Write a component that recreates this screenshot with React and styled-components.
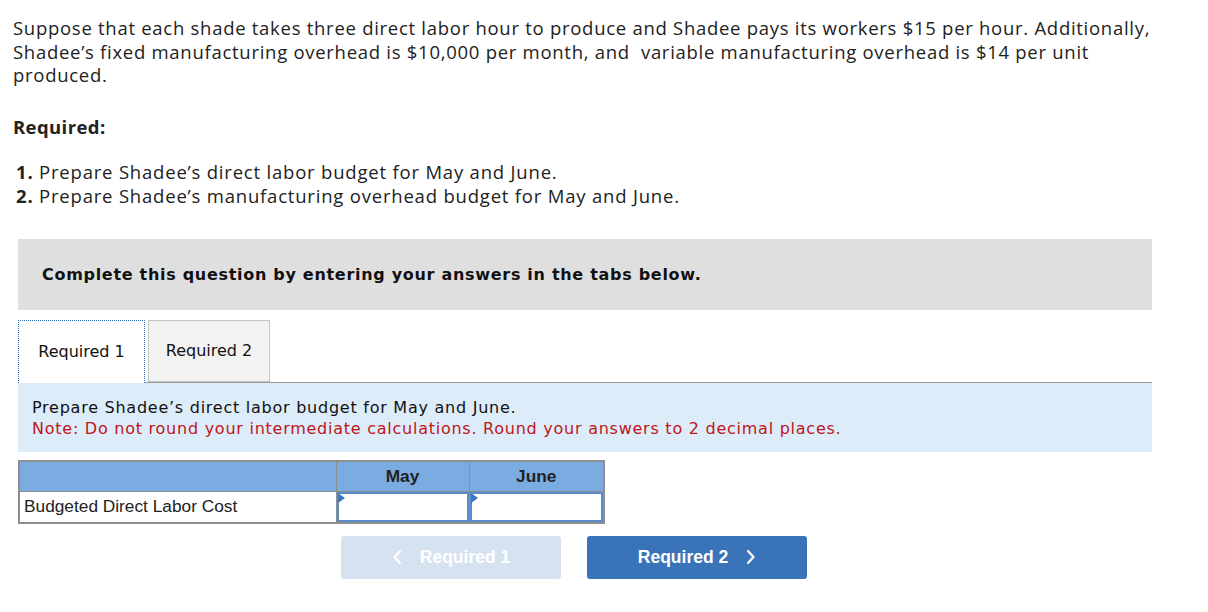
import React from "react";
import styled, { createGlobalStyle } from "styled-components";

const GlobalStyle = createGlobalStyle`
  body {
    margin: 0;
    background: #fff;
    font-family: "Open Sans", "Lato", sans-serif;
    color: #222;
  }
`;

const Page = styled.div`
  width: 1208px;
  padding-top: 16px;
`;

const Para = styled.p`
  margin: 0 0 0 13px;
  font-size: 18.5px;
  letter-spacing: 0.72px;
  line-height: 23.5px;
  color: #222;
  white-space: nowrap;
`;

const Heading = styled.h3`
  margin: 28px 0 0 13px;
  font-size: 18.5px;
  letter-spacing: 0.4px;
  font-weight: 700;
  line-height: 23px;
`;

const ReqList = styled.ol`
  list-style: none;
  margin: 22px 0 0 16px;
  padding: 0;
  font-size: 18.5px;
  letter-spacing: 0.8px;
  line-height: 24px;

  b {
    font-weight: 700;
  }
`;

const Instructions = styled.div`
  margin: 31px 0 0 18px;
  width: 1134px;
  height: 71px;
  background: #dfdfdf;
  display: flex;
  align-items: center;
  padding-left: 24px;
  box-sizing: border-box;
  font-family: Verdana, "DejaVu Sans", sans-serif;
  font-weight: 700;
  font-size: 16px;
  color: #111;
  letter-spacing: 0.7px;
`;

const TabBar = styled.div`
  margin: 10px 0 0 18px;
  width: 1134px;
  display: flex;
  align-items: flex-end;
  border-bottom: 1px solid #999;
  height: 62px;
`;

const Tab = styled.div`
  box-sizing: border-box;
  height: ${p => (p.active ? "63px" : "62px")};
  margin-bottom: ${p => (p.active ? "-1px" : "0")};
  width: ${p => (p.active ? "127px" : "122px")};
  margin-right: 3px;
  display: flex;
  align-items: center;
  justify-content: center;
  font-family: Verdana, "DejaVu Sans", sans-serif;
  font-size: 16px;
  color: #111;
  background: ${p => (p.active ? "#fff" : "#f2f2f2")};
  border: ${p => (p.active ? "1px dotted #2f6fbf" : "1px solid #c4c4c4")};
  border-bottom: ${p => (p.active ? "none" : "1px solid #c4c4c4")};
`;

const Prompt = styled.div`
  margin-left: 18px;
  width: 1134px;
  height: 69px;
  box-sizing: border-box;
  background: #dcecf9;
  padding: 14px 0 0 14px;
  font-family: Verdana, "DejaVu Sans", sans-serif;
  font-size: 16px;
  letter-spacing: 0.75px;
  line-height: 21px;
  color: #111;
`;

const Note = styled.div`
  color: #c0151b;
`;

const Grid = styled.table`
  margin: 8px 0 0 18px;
  width: 585px;
  table-layout: fixed;
  border-collapse: collapse;
  font-family: "Liberation Sans", Arial, sans-serif;
  font-size: 17.3px;
  border: 2px solid #8e8e8e;

  th {
    background: #7aace2;
    height: 29px;
    font-weight: 700;
    color: #222;
    border: 1px solid #8e8e8e;
    padding: 0;
  }

  td {
    border: 1px solid #8e8e8e;
    height: 30px;
    padding: 0;
  }
`;

const LabelCell = styled.td`
  padding-left: 4px !important;
  color: #222;
  white-space: nowrap;
`;

const InputCell = styled.td`
  position: relative;
`;

const Field = styled.div`
  position: absolute;
  inset: 0;
  border: 2px solid #5a8bc8;
  background: #fff;

  &::before {
    content: "";
    position: absolute;
    left: -1px;
    top: -1px;
    border-style: solid;
    border-width: 5px 0 5px 7px;
    border-color: transparent transparent transparent #3a78c2;
  }
`;

const Nav = styled.div`
  display: flex;
  gap: 26px;
  margin: 12px 0 0 341px;
`;

const NavButton = styled.button`
  width: 220px;
  height: 43px;
  border: none;
  border-radius: 3px;
  background: ${p => (p.disabled ? "#d6e2f0" : "#3a74b8")};
  color: #fff;
  font-family: "Liberation Sans", Arial, sans-serif;
  font-weight: 700;
  font-size: 17.5px;
  display: flex;
  align-items: center;
  justify-content: center;
  gap: 18px;
  padding: 0;
  cursor: ${p => (p.disabled ? "default" : "pointer")};
`;

const Chevron = ({ dir }) => (
  <svg width="10" height="16" viewBox="0 0 10 16">
    <path
      d={dir === "left" ? "M8 2 L2.5 8 L8 14" : "M2 2 L7.5 8 L2 14"}
      fill="none"
      stroke="#fff"
      strokeWidth="2.2"
      strokeLinecap="round"
      strokeLinejoin="round"
    />
  </svg>
);

export default function App() {
  return (
    <>
      <GlobalStyle />
      <Page>
        <Para>
          Suppose that each shade takes three direct labor hour to produce and
          Shadee pays its workers $15 per hour. Additionally,
          <br />
          Shadee’s fixed manufacturing overhead is $10,000 per month, and&nbsp;
          variable manufacturing overhead is $14 per unit
          <br />
          produced.
        </Para>
        <Heading>Required:</Heading>
        <ReqList>
          <li>
            <b>1.</b> Prepare Shadee’s direct labor budget for May and June.
          </li>
          <li>
            <b>2.</b> Prepare Shadee’s manufacturing overhead budget for May and
            June.
          </li>
        </ReqList>
        <Instructions>
          Complete this question by entering your answers in the tabs below.
        </Instructions>
        <TabBar>
          <Tab active>Required 1</Tab>
          <Tab>Required 2</Tab>
        </TabBar>
        <Prompt>
          Prepare Shadee’s direct labor budget for May and June.
          <Note>
            Note: Do not round your intermediate calculations. Round your
            answers to 2 decimal places.
          </Note>
        </Prompt>
        <Grid>
          <colgroup>
            <col style={{ width: 317 }} />
            <col style={{ width: 133 }} />
            <col style={{ width: 135 }} />
          </colgroup>
          <thead>
            <tr>
              <th></th>
              <th>May</th>
              <th>June</th>
            </tr>
          </thead>
          <tbody>
            <tr>
              <LabelCell>Budgeted Direct Labor Cost</LabelCell>
              <InputCell>
                <Field />
              </InputCell>
              <InputCell>
                <Field />
              </InputCell>
            </tr>
          </tbody>
        </Grid>
        <Nav>
          <NavButton disabled>
            <Chevron dir="left" />
            Required 1
          </NavButton>
          <NavButton>
            Required 2
            <Chevron dir="right" />
          </NavButton>
        </Nav>
      </Page>
    </>
  );
}
